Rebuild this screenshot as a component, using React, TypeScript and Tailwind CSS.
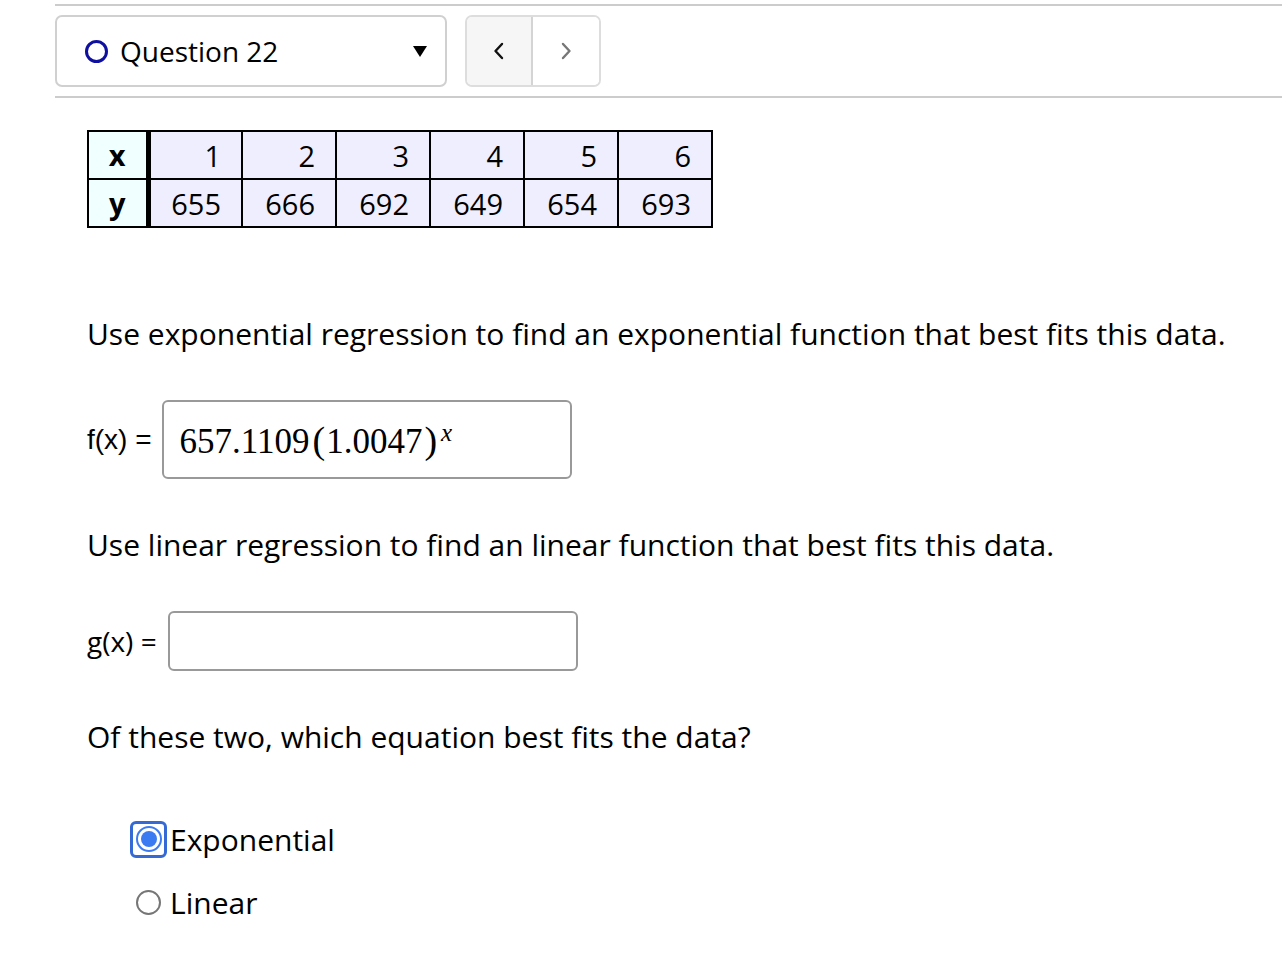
const xs = [1, 2, 3, 4, 5, 6];
const ys = [655, 666, 692, 649, 654, 693];

const sans = "font-['Open_Sans',sans-serif]";

function Radio({ checked, label }: { checked?: boolean; label: string }) {
  return (
    <label className="flex items-center h-[38px]">
      {checked ? (
        <span className="w-[37px] h-[37px] rounded-[6px] border-[3px] border-[#3569d4] flex items-center justify-center">
          <span className="w-[26px] h-[26px] rounded-full border-[2px] border-[#3b7bf2] bg-white flex items-center justify-center">
            <span className="w-[16px] h-[16px] rounded-full bg-[#3b7bf2]" />
          </span>
        </span>
      ) : (
        <span className="w-[37px] h-[37px] flex items-center justify-center">
          <span className="w-[25px] h-[25px] rounded-full border-[2px] border-[#767676] bg-white" />
        </span>
      )}
      <span className="ml-[3px] text-[30px] text-black">{label}</span>
    </label>
  );
}

export default function App() {
  return (
    <div className={`${sans} bg-white min-h-[960px] pl-[55px] pt-[4px] text-black`}>
      <div className="h-[2px] bg-[#cccccc]" />

      <div className="flex items-center gap-[18px] mt-[9px]">
        <div className="w-[392px] h-[72px] rounded-[7px] border-[2px] border-[#d0d0d0] flex items-center pl-[28px] pr-[18px]">
          <span className="w-[23px] h-[23px] rounded-full border-[3px] border-[#1010a0]" />
          <span className="ml-[12px] text-[28px]">Question 22</span>
          <span className="ml-auto w-0 h-0 border-l-[7px] border-r-[7px] border-t-[11px] border-l-transparent border-r-transparent border-t-black" />
        </div>
        <div className="flex h-[72px] rounded-[7px] border-[2px] border-[#dddddd] overflow-hidden">
          <button className="w-[66px] bg-[#f6f6f6] border-r-[2px] border-[#d4d4d4] flex items-center justify-center">
            <svg width="14" height="20" viewBox="0 0 14 20" fill="none" stroke="#111" strokeWidth="2.4" strokeLinecap="round" strokeLinejoin="round">
              <path d="M10 3 L3.5 10 L10 17" />
            </svg>
          </button>
          <button className="w-[66px] bg-white flex items-center justify-center">
            <svg width="14" height="20" viewBox="0 0 14 20" fill="none" stroke="#777" strokeWidth="2.4" strokeLinecap="round" strokeLinejoin="round">
              <path d="M4 3 L10.5 10 L4 17" />
            </svg>
          </button>
        </div>
      </div>

      <div className="h-[2px] bg-[#cccccc] mt-[9px]" />

      <div className="pl-[32px]">
        <table className="mt-[32px] border-collapse border-[2px] border-black text-[29px]">
          <tbody>
            <tr className="h-[48px]">
              <th className="w-[60px] bg-[#f0ffff] border-[2px] border-black border-r-[5px] font-bold text-center">x</th>
              {xs.map(v => (
                <td key={v} className="w-[94px] bg-[#eeeeff] border-[2px] border-black text-right pr-[20px] leading-none">{v}</td>
              ))}
            </tr>
            <tr className="h-[48px]">
              <th className="bg-[#f0ffff] border-[2px] border-black border-r-[5px] font-bold text-center">y</th>
              {ys.map(v => (
                <td key={v} className="bg-[#eeeeff] border-[2px] border-black text-right pr-[20px] leading-none">{v}</td>
              ))}
            </tr>
          </tbody>
        </table>

        <p className="mt-[88px] text-[30px] leading-[36px]">
          Use exponential regression to find an exponential function that best fits this data.
        </p>

        <div className="mt-[48px] flex items-center">
          <span className="font-['Liberation_Sans',Arial,sans-serif] text-[28px]">f(x) =</span>
          <div className="ml-[10px] w-[410px] h-[79px] rounded-[6px] border-[2px] border-[#999999] flex items-center pl-[16px]">
            <span className="font-['Liberation_Serif','Times_New_Roman',serif] text-[35px] leading-none">
              657.1109<span className="ml-[3px] mr-[1px] text-[38px]">(</span>1.0047<span className="ml-[2px] text-[38px]">)</span>
              <sup className="italic text-[25px] relative top-[-12px] ml-[4px]">x</sup>
            </span>
          </div>
        </div>

        <p className="mt-[48px] text-[30px] leading-[36px]">
          Use linear regression to find an linear function that best fits this data.
        </p>

        <div className="mt-[48px] flex items-center">
          <span className="text-[28px]">g(x) =</span>
          <div className="ml-[11px] w-[410px] h-[60px] rounded-[6px] border-[2px] border-[#999999]" />
        </div>

        <p className="mt-[48px] text-[30px] leading-[36px]">
          Of these two, which equation best fits the data?
        </p>

        <div className="mt-[65px] ml-[43px] flex flex-col gap-[25px]">
          <Radio checked label="Exponential" />
          <Radio label="Linear" />
        </div>
      </div>
    </div>
  );
}
